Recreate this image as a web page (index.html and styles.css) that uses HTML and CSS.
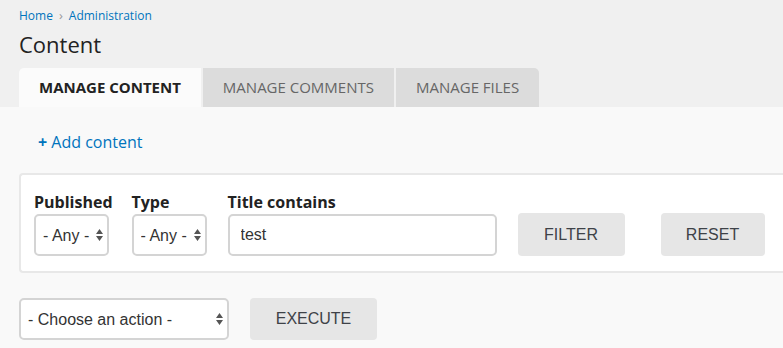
FILE: index.html
```html
<!DOCTYPE html>
<html>
<head>
<meta charset="utf-8">
<link rel="stylesheet" href="styles.css">
</head>
<body>
<div class="header">
  <nav class="breadcrumb"><a href="#">Home</a><span class="sep">&#x203A;</span><a href="#">Administration</a></nav>
  <h1 class="title">Content</h1>
  <ul class="tabs">
    <li class="tab active">MANAGE CONTENT</li>
    <li class="tab">MANAGE COMMENTS</li>
    <li class="tab">MANAGE FILES</li>
  </ul>
</div>
<div class="main">
  <a class="add" href="#"><span class="plus">+</span> Add content</a>
  <div class="filters">
    <div class="field f1">
      <label class="label">Published</label>
      <div class="selwrap w75">
        <select class="sel"><option>- Any -</option></select>
        <svg class="arrows" width="7" height="12" viewBox="0 0 7 12"><path d="M3.5 0L7 5H0z M3.5 12L0 7h7z" fill="#555"/></svg>
      </div>
    </div>
    <div class="field f2">
      <label class="label">Type</label>
      <div class="selwrap w75">
        <select class="sel"><option>- Any -</option></select>
        <svg class="arrows" width="7" height="12" viewBox="0 0 7 12"><path d="M3.5 0L7 5H0z M3.5 12L0 7h7z" fill="#555"/></svg>
      </div>
    </div>
    <div class="field f3">
      <label class="label">Title contains</label>
      <input class="text" type="text" value="test">
    </div>
    <button class="btn filter">FILTER</button>
    <button class="btn reset">RESET</button>
  </div>
  <div class="actions">
    <div class="selwrap w210">
      <select class="sel"><option>- Choose an action -</option></select>
      <svg class="arrows" width="7" height="12" viewBox="0 0 7 12"><path d="M3.5 0L7 5H0z M3.5 12L0 7h7z" fill="#555"/></svg>
    </div>
    <button class="btn execute">EXECUTE</button>
  </div>
</div>
</body>
</html>
```
FILE: styles.css
```css
html, body {
  margin: 0;
  padding: 0;
  background: #f9f9f9;
  font-family: "Open Sans", sans-serif;
  color: #222;
  overflow: hidden;
}
.header {
  background: #f0f0f0;
  padding: 7px 0 0 19px;
}
.breadcrumb {
  font-size: 12px;
  line-height: 17px;
}
.breadcrumb a {
  color: #0074bd;
  text-decoration: none;
}
.breadcrumb .sep {
  color: #999;
  margin: 0 6px;
  font-size: 13px;
}
.title {
  margin: 5px 0 0 0;
  font-size: 22px;
  font-weight: 400;
  line-height: 30px;
  color: #222;
}
.tabs {
  list-style: none;
  margin: 9px 0 0 0;
  padding: 0;
  display: flex;
  gap: 2px;
}
.tab {
  height: 39px;
  line-height: 39px;
  padding: 0 20px;
  font-size: 15px;
  color: #666;
  background: #dcdcdc;
}
.tab.active {
  background: #fbfbfb;
  color: #222;
  font-weight: 700;
  border-top-left-radius: 5px;
}
.tab:last-child {
  border-top-right-radius: 5px;
}
.main {
  padding: 24px 0 0 19px;
}
.add {
  display: inline-block;
  margin-left: 19px;
  color: #0074bd;
  text-decoration: none;
  font-size: 16px;
  line-height: 22px;
}
.plus {
  font-weight: 700;
}
.filters {
  margin-top: 20px;
  background: #fff;
  border: 2px solid #e8e8e8;
  border-right: none;
  border-top-left-radius: 4px;
  border-bottom-left-radius: 4px;
  padding: 16px 0 15px 13px;
  display: flex;
  align-items: flex-end;
  width: 800px;
}
.field {
  display: flex;
  flex-direction: column;
}
.f1 { margin-right: 19px; }
.f2 { margin-right: 21px; }
.f3 { margin-right: 21px; }
.label {
  font-size: 16px;
  font-weight: 700;
  line-height: 22px;
  margin-bottom: 1px;
  color: #222;
}
.selwrap {
  position: relative;
  height: 42px;
}
.w75 { width: 75px; }
.w210 { width: 210px; }
.sel {
  appearance: none;
  -webkit-appearance: none;
  width: 100%;
  height: 42px;
  box-sizing: border-box;
  border: 2px solid #d4d4d4;
  border-radius: 5px;
  background: #fff;
  font-family: "Liberation Sans", Arial, sans-serif;
  font-size: 16px;
  color: #333;
  padding: 0 0 0 7px;
  margin: 0;
}
.arrows {
  position: absolute;
  right: 6px;
  top: 15px;
}
.text {
  width: 269px;
  height: 42px;
  box-sizing: border-box;
  border: 2px solid #d4d4d4;
  border-radius: 5px;
  font-family: "Liberation Sans", Arial, sans-serif;
  font-size: 16px;
  color: #333;
  padding: 0 0 0 11px;
  margin: 0;
}
.btn {
  height: 43px;
  border: none;
  border-radius: 4px;
  background: #e6e6e6;
  font-family: "Liberation Sans", Arial, sans-serif;
  font-size: 16px;
  color: #3e4248;
  padding: 0;
  margin: 0;
}
.filter {
  width: 107px;
  margin-right: 36px;
}
.reset {
  width: 104px;
}
.actions {
  margin-top: 25px;
  display: flex;
  gap: 21px;
}
.execute {
  width: 127px;
  height: 42px;
}
```
